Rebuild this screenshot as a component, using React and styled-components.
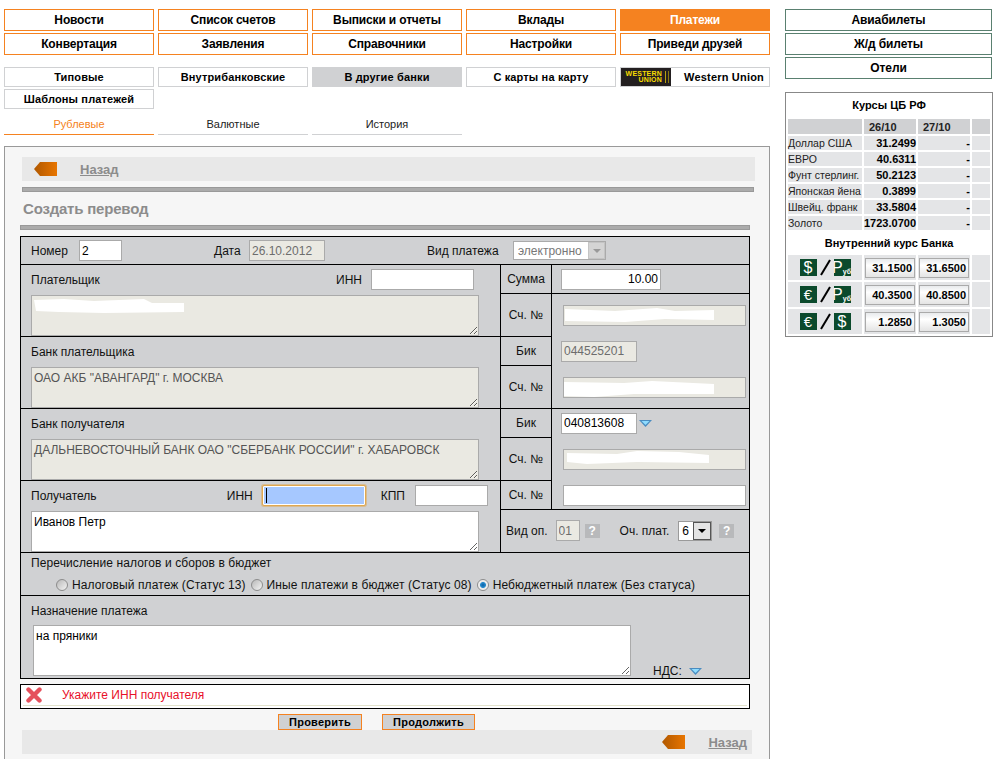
import styled, { createGlobalStyle } from 'styled-components';

const GlobalStyle = createGlobalStyle`
	html,
	body {
		margin: 0;
		height: 759px;
		overflow: hidden;
		background: #fff;
		color: #000;
		font-family: 'Liberation Sans', Arial, sans-serif;
		font-size: 12px;
	}
`;

const Page = styled.div`
	display: flex;
	align-items: flex-start;
	padding: 9px 0 0 4px;
`;

const MainColumn = styled.div`
	width: 766px;
	flex-shrink: 0;
`;

const SideColumn = styled.div`
	width: 208px;
	margin-left: 15px;
`;

const NavGrid = styled.div`
	display: grid;
	grid-template-columns: repeat(5, 150px);
	gap: 2px 4px;
	margin-bottom: ${props => props.$bottom || 0}px;
`;

const NavItem = styled.div`
	display: flex;
	align-items: center;
	justify-content: center;
	box-sizing: border-box;
	height: 22px;
	border: 1px solid #f58220;
	background: ${props => (props.$active ? '#f58220' : '#fff')};
	color: ${props => (props.$active ? '#fff' : '#000')};
	font-weight: 700;
	letter-spacing: -0.15px;
`;

const SubItem = styled.div`
	display: flex;
	align-items: center;
	justify-content: center;
	box-sizing: border-box;
	height: 20px;
	border: 1px solid #d0d1d3;
	background: ${props => (props.$active ? '#d0d1d3' : '#fff')};
	font-size: 11px;
	font-weight: 700;
	letter-spacing: 0.15px;
`;

const UnionItem = styled(SubItem)`
	justify-content: flex-start;
	letter-spacing: 0.2px;
`;

const UnionLogo = styled.div`
	display: flex;
	align-items: center;
	justify-content: flex-end;
	gap: 3px;
	box-sizing: border-box;
	width: 50px;
	height: 18px;
	margin-right: 13px;
	padding: 0 2px;
	background: #231f20;
	color: #f7dc00;
`;

const UnionWord = styled.div`
	font-size: 7px;
	font-weight: 700;
	line-height: 6px;
	letter-spacing: 0.2px;
	text-align: right;
`;

const UnionBars = styled.div`
	width: 2px;
	height: 12px;
	border-left: 1px solid #b89f10;
	border-right: 1px solid #8a7a10;
`;

const TabRow = styled.div`
	display: grid;
	grid-template-columns: repeat(3, 150px);
	gap: 4px;
	margin: 4px 0 11px;
`;

const Tab = styled.div`
	display: flex;
	align-items: center;
	justify-content: center;
	box-sizing: border-box;
	height: 22px;
	border-bottom: 1px solid ${props => (props.$active ? '#f58220' : '#d0d1d3')};
	color: ${props => (props.$active ? '#f58220' : '#222')};
	font-size: 11px;
`;

const Panel = styled.div`
	box-sizing: border-box;
	height: 640px;
	padding: 10px 0 0 15px;
	border: 1px solid #999;
	background: #f6f6f6;
`;

const BackBar = styled.div`
	display: flex;
	align-items: center;
	justify-content: ${props => (props.$end ? 'flex-end' : 'flex-start')};
	gap: 23px;
	box-sizing: border-box;
	width: ${props => props.$width}px;
	height: 24px;
	margin-left: 2px;
	padding: ${props => (props.$end ? '0 5px 0 0' : '0 0 0 12px')};
	background: #e8e8e8;
`;

const BackLink = styled.a`
	color: #8c8c8c;
	font-size: 13px;
	font-weight: 700;
	text-decoration: underline;
`;

const Rule = styled.div`
	box-sizing: border-box;
	width: ${props => props.$width}px;
	height: 5px;
	margin-left: ${props => props.$left}px;
	border: 1px solid #999;
	background: #ababab;
`;

const TopRule = styled(Rule)`
	margin-top: 6px;
`;

const Title = styled.h2`
	display: flex;
	align-items: center;
	height: 33px;
	margin: 0 0 0 3px;
	color: #8c8c8c;
	font-size: 15px;
	font-weight: 700;
	letter-spacing: -0.2px;
`;

const FormTable = styled.div`
	box-sizing: border-box;
	width: 730px;
	margin-top: 6px;
	border: 1px solid #000;
	background: #d0d1d3;
	color: #111;
`;

const HeadRow = styled.div`
	display: grid;
	grid-template-columns: 183px 213px auto;
	align-items: center;
	box-sizing: border-box;
	height: 28px;
	padding-left: 10px;
	border-bottom: 1px solid #000;
`;

const HeadField = styled.div`
	display: flex;
	align-items: center;
`;

const HeadLabel = styled.span`
	width: ${props => props.$width}px;
	flex-shrink: 0;
`;

const Middle = styled.div`
	display: flex;
`;

const LeftStack = styled.div`
	width: 479px;
	flex-shrink: 0;
	border-right: 1px solid #000;
`;

const PartyBlock = styled.div`
	box-sizing: border-box;
	height: 72px;
	padding-left: 10px;
	border-bottom: 1px solid #000;
`;

const PartyHead = styled.div`
	display: flex;
	align-items: center;
	box-sizing: border-box;
	height: 30px;
	padding: 0 ${props => props.$right || 0}px 1px 0;
`;

const PartyTitle = styled.span`
	flex: 1;
`;

const InlineLabel = styled.span`
	margin: 0 ${props => props.$right || 9}px 0 ${props => props.$left || 0}px;
`;

const RightStack = styled.div`
	flex: 1;
	min-width: 0;
`;

const RightRow = styled.div`
	display: flex;
	height: ${props => (props.$tall ? 43 : 29)}px;
`;

const CellLabel = styled.div`
	display: flex;
	align-items: center;
	justify-content: center;
	box-sizing: border-box;
	width: 51px;
	flex-shrink: 0;
	border-right: 1px solid #000;
	border-bottom: 1px solid #000;
`;

const CellValue = styled.div`
	display: flex;
	align-items: center;
	flex: 1;
	box-sizing: border-box;
	padding-left: ${props => (props.$account ? 11 : 9)}px;
	border-bottom: 1px solid ${props => (props.$open ? 'transparent' : '#000')};
`;

const OperationRow = styled.div`
	display: flex;
	align-items: center;
	box-sizing: border-box;
	height: 43px;
	padding: 0 0 1px 5px;
	border-bottom: 1px solid #000;
`;

const Field = styled.input`
	box-sizing: border-box;
	width: ${props => props.$width}px;
	height: 21px;
	margin: 0;
	padding: 0 2px;
	border: 1px solid #aaa;
	border-radius: 0;
	outline: none;
	background: ${props => (props.disabled ? '#eae9e2' : '#fff')};
	color: ${props => (props.disabled ? '#6d6d6d' : '#000')};
	font-family: inherit;
	font-size: 12px;
	text-align: ${props => props.$align || 'left'};
	opacity: 1;
`;

const FocusField = styled.div`
	display: flex;
	align-items: center;
	box-sizing: border-box;
	width: 104px;
	height: 21px;
	padding: 1px 2px;
	border: 1px solid #e0a850;
	border-radius: 2px;
	background: #a6c8ff;
	box-shadow: inset 0 0 0 1px #fff, 0 0 0 1px rgba(224, 168, 80, 0.5);
`;

const Caret = styled.div`
	width: 1px;
	height: 15px;
	margin-left: 1px;
	background: #000;
`;

const Note = styled.textarea`
	display: block;
	box-sizing: border-box;
	width: ${props => props.$width}px;
	height: ${props => props.$height}px;
	margin: 0;
	padding: 3px 2px;
	border: 1px solid #aaa;
	border-radius: 0;
	outline: none;
	overflow: hidden;
	resize: both;
	background: ${props => (props.$plain ? '#fff' : '#eae9e2')};
	color: ${props => (props.$plain ? '#000' : '#555')};
	font-family: inherit;
	font-size: 12px;
`;

const BlotHolder = styled.div`
	position: relative;
	line-height: 0;
`;

const BlotShape = styled.svg`
	position: absolute;
	top: ${props => props.$top}px;
	left: ${props => props.$left}px;
`;

const Combo = styled.div`
	display: flex;
	align-items: center;
	justify-content: space-between;
	box-sizing: border-box;
	width: ${props => props.$width}px;
	height: ${props => props.$height}px;
	padding-left: ${props => (props.$off ? 4 : 3)}px;
	border: ${props => (props.$off ? '1px solid #aaa' : '1px solid #9a9a9a')};
	background: #fff;
	color: ${props => (props.$off ? '#777' : '#000')};
`;

const ComboButton = styled.div`
	display: flex;
	align-items: center;
	justify-content: center;
	box-sizing: border-box;
	width: ${props => (props.$off ? 17 : 18)}px;
	height: 100%;
	border: 1px solid ${props => (props.$off ? '#c4c4c4' : '#555')};
	background: ${props => (props.$off ? '#d4d4d4' : '#e4e4e4')};
`;

const ComboArrow = styled.div`
	width: 0;
	height: 0;
	border-top: 4px solid ${props => (props.$off ? '#999' : '#000')};
	border-left: 4px solid transparent;
	border-right: 4px solid transparent;
`;

const HelpMark = styled.div`
	display: flex;
	align-items: center;
	justify-content: center;
	width: 15px;
	height: 14px;
	margin: 0 ${props => props.$right || 0}px 0 ${props => props.$left}px;
	background: #b8b9bb;
	color: #fff;
	font-size: 12px;
	font-weight: 700;
`;

const OperationLabel = styled.span`
	margin-right: ${props => props.$right}px;
`;

const DropMark = styled.svg`
	flex-shrink: 0;
	margin-left: ${props => props.$left}px;
`;

const TaxRow = styled.div`
	box-sizing: border-box;
	height: 43px;
	padding: 3px 0 0 10px;
	border-bottom: 1px solid #000;
	letter-spacing: 0.1px;
`;

const TaxOptions = styled.div`
	display: flex;
	gap: 5px;
	margin: 8px 0 0 25px;
`;

const TaxOption = styled.label`
	display: flex;
	align-items: center;
	gap: 4px;
`;

const Radio = styled.span`
	display: block;
	box-sizing: border-box;
	width: 12px;
	height: 12px;
	border: 1px solid #8c8c8c;
	border-radius: 50%;
	background: ${props =>
		props.$checked
			? 'radial-gradient(circle, #0b5fa5 0, #2a8fd0 38%, #e8e8e8 46%, #fff 100%)'
			: 'linear-gradient(135deg, #b8b8b8, #f4f4f4)'};
`;

const PurposeRow = styled.div`
	box-sizing: border-box;
	height: 82px;
	padding: 8px 0 0 10px;
`;

const PurposeBody = styled.div`
	display: flex;
	align-items: flex-end;
	margin: 7px 0 0 2px;
`;

const VatBlock = styled.div`
	display: flex;
	align-items: center;
	margin: 0 0 -2px 22px;
`;

const ErrorBox = styled.div`
	box-sizing: border-box;
	width: 730px;
	height: 25px;
	margin-top: 5px;
	padding: 0 2px;
	border: 1px solid #000;
	background: #fff;
`;

const ErrorBody = styled.div`
	display: flex;
	align-items: center;
	height: 20px;
	border-bottom: 1px solid #e2e2cc;
	color: #e8102a;
`;

const ErrorIcon = styled.svg`
	margin: 0 20px 0 3px;
`;

const Actions = styled.div`
	display: flex;
	gap: 20px;
	margin: 5px 0 0 258px;
`;

const ActionButton = styled.button`
	box-sizing: border-box;
	width: ${props => props.$width}px;
	height: 16px;
	padding: 0;
	border: 1px solid #f58220;
	border-radius: 0;
	background: #d0d1d3;
	color: #000;
	font-family: inherit;
	font-size: 11px;
	font-weight: 700;
	letter-spacing: 0.25px;
`;

const SideLink = styled.div`
	display: flex;
	align-items: center;
	justify-content: center;
	box-sizing: border-box;
	width: 207px;
	height: 22px;
	margin-bottom: 2px;
	border: 1px solid #5a8070;
	font-weight: 700;
	letter-spacing: -0.1px;
`;

const RatesBox = styled.div`
	box-sizing: border-box;
	width: 208px;
	margin-top: 13px;
	border: 1px solid #888;
	background: #fff;
`;

const RatesTitle = styled.div`
	display: flex;
	align-items: center;
	justify-content: center;
	box-sizing: border-box;
	height: ${props => props.$height}px;
	font-size: 11px;
	font-weight: 700;
`;

const RatesTable = styled.table`
	width: 206px;
	table-layout: fixed;
	border-collapse: separate;
	border-spacing: 2px;
`;

const RatesColumn = styled.col`
	width: ${props => props.$width}px;
`;

const HeadCell = styled.th`
	height: 15px;
	padding: 0 0 0 5px;
	background: #d0d1d3;
	font-size: 11px;
	font-weight: 700;
	text-align: left;
	color: #222;
`;

const NameCell = styled.td`
	height: 14px;
	padding: 0;
	background: #e4e5e7;
	color: #222;
	font-size: 10.5px;
	white-space: nowrap;
`;

const ValueCell = styled.td`
	height: 14px;
	padding: 0;
	background: #e4e5e7;
	font-size: 11px;
	font-weight: 700;
	text-align: right;
`;

const PairCell = styled.td`
	height: 25px;
	padding: 0;
	background: #e4e5e7;
`;

const PairIcons = styled.div`
	display: flex;
	align-items: center;
	justify-content: center;
`;

const MoneyBadge = styled.div`
	display: flex;
	align-items: center;
	justify-content: center;
	width: 17px;
	height: 17px;
	overflow: hidden;
	background: #0b4a2c;
	color: #fff;
	font-size: ${props => props.$size || 16}px;
	line-height: 17px;
`;

const RubleSmall = styled.span`
	align-self: flex-end;
	font-size: 7px;
	font-weight: 700;
	line-height: 9px;
`;

const RubleBig = styled.span`
	margin-left: -1px;
	font-size: 16px;
`;

const RateField = styled.div`
	display: flex;
	align-items: center;
	justify-content: flex-end;
	box-sizing: border-box;
	height: 20px;
	margin: 0 1px;
	padding-right: 2px;
	border: 1px solid #aaa;
	background: linear-gradient(#e8eaec, #fff 35%, #e4e4e4);
	font-size: 11px;
	font-weight: 700;
`;

const BackArrow = () => (
	<svg width="23" height="14" viewBox="0 0 23 14">
		<defs>
			<linearGradient id="back-fill" x1="0" x2="1" y1="0" y2="0">
				<stop offset="0" stopColor="#b05800" />
				<stop offset="1" stopColor="#e87500" />
			</linearGradient>
		</defs>
		<polygon points="0,7 6,0 23,0 23,14 6,14" fill="url(#back-fill)" />
	</svg>
);

const DownMark = ({ left }) => (
	<DropMark $left={left} width="13" height="7" viewBox="0 0 13 7">
		<polygon points="0,0 13,0 6.5,7" fill="#4a8cc0" />
		<polygon points="2.5,1 10.5,1 6.5,5" fill="#8fdcff" />
	</DropMark>
);

const Blot = ({ top, left, width, height, points }) => (
	<BlotShape $top={top} $left={left} width={width} height={height} viewBox={`0 0 ${width} ${height}`}>
		<polygon points={points} fill="#fff" />
	</BlotShape>
);

const Dollar = () => <MoneyBadge>$</MoneyBadge>;
const Euro = () => <MoneyBadge $size={15}>€</MoneyBadge>;
const Ruble = () => (
	<MoneyBadge>
		<RubleBig>Р</RubleBig>
		<RubleSmall>уб</RubleSmall>
	</MoneyBadge>
);

const Slash = () => (
	<svg width="17" height="17" viewBox="0 0 17 17">
		<line x1="4" y1="16" x2="13" y2="1" stroke="#000" strokeWidth="2" />
	</svg>
);

const mainNav = [
	'Новости',
	'Список счетов',
	'Выписки и отчеты',
	'Вклады',
	'Платежи',
	'Конвертация',
	'Заявления',
	'Справочники',
	'Настройки',
	'Приведи друзей',
];

const cbRates = [
	['Доллар США', '31.2499'],
	['ЕВРО', '40.6311'],
	['Фунт стерлинг.', '50.2123'],
	['Японская йена', '0.3899'],
	['Швейц. франк', '33.5804'],
	['Золото', '1723.0700'],
];

const bankRates = [
	[Dollar, Ruble, '31.1500', '31.6500'],
	[Euro, Ruble, '40.3500', '40.8500'],
	[Euro, Dollar, '1.2850', '1.3050'],
];

const RatesColumns = () => (
	<colgroup>
		<RatesColumn $width={74} />
		<RatesColumn $width={52} />
		<RatesColumn $width={52} />
		<RatesColumn $width={18} />
	</colgroup>
);

const App = () => (
	<>
		<GlobalStyle />
		<Page>
			<MainColumn>
				<NavGrid $bottom={12}>
					{mainNav.map(item => (
						<NavItem key={item} $active={item === 'Платежи'}>
							{item}
						</NavItem>
					))}
				</NavGrid>

				<NavGrid>
					<SubItem>Типовые</SubItem>
					<SubItem>Внутрибанковские</SubItem>
					<SubItem $active>В другие банки</SubItem>
					<SubItem>С карты на карту</SubItem>
					<UnionItem>
						<UnionLogo>
							<UnionWord>
								WESTERN
								<br />
								UNION
							</UnionWord>
							<UnionBars />
						</UnionLogo>
						Western Union
					</UnionItem>
					<SubItem>Шаблоны платежей</SubItem>
				</NavGrid>

				<TabRow>
					<Tab $active>Рублевые</Tab>
					<Tab>Валютные</Tab>
					<Tab>История</Tab>
				</TabRow>

				<Panel>
					<BackBar $width={733}>
						<BackArrow />
						<BackLink>Назад</BackLink>
					</BackBar>
					<TopRule $width={732} $left={2} />
					<Title>Создать перевод</Title>
					<Rule $width={730} $left={0} />

					<FormTable>
						<HeadRow>
							<HeadField>
								<HeadLabel $width={48}>Номер</HeadLabel>
								<Field $width={43} defaultValue="2" />
							</HeadField>
							<HeadField>
								<HeadLabel $width={35}>Дата</HeadLabel>
								<Field $width={76} disabled defaultValue="26.10.2012" />
							</HeadField>
							<HeadField>
								<HeadLabel $width={86}>Вид платежа</HeadLabel>
								<Combo $off $width={93} $height={19}>
									электронно
									<ComboButton $off>
										<ComboArrow $off />
									</ComboButton>
								</Combo>
							</HeadField>
						</HeadRow>

						<Middle>
							<LeftStack>
								<PartyBlock>
									<PartyHead $right={26}>
										<PartyTitle>Плательщик</PartyTitle>
										<InlineLabel>ИНН</InlineLabel>
										<Field $width={103} />
									</PartyHead>
									<BlotHolder>
										<Note $width={448} $height={41} readOnly defaultValue="" />
										<Blot
											top={3}
											left={3}
											width={150}
											height={15}
											points="0,2 30,1 60,3 110,1 118,5 150,5 150,14 70,15 25,14 2,13"
										/>
									</BlotHolder>
								</PartyBlock>
								<PartyBlock>
									<PartyHead>
										<PartyTitle>Банк плательщика</PartyTitle>
									</PartyHead>
									<Note $width={448} $height={41} readOnly defaultValue={'ОАО АКБ "АВАНГАРД" г. МОСКВА'} />
								</PartyBlock>
								<PartyBlock>
									<PartyHead>
										<PartyTitle>Банк получателя</PartyTitle>
									</PartyHead>
									<Note
										$width={448}
										$height={41}
										readOnly
										defaultValue={'ДАЛЬНЕВОСТОЧНЫЙ БАНК ОАО "СБЕРБАНК РОССИИ" г. ХАБАРОВСК'}
									/>
								</PartyBlock>
								<PartyBlock>
									<PartyHead $right={12}>
										<PartyTitle>Получатель</PartyTitle>
										<InlineLabel>ИНН</InlineLabel>
										<FocusField>
											<Caret />
										</FocusField>
										<InlineLabel $left={15} $right={10}>
											КПП
										</InlineLabel>
										<Field $width={73} />
									</PartyHead>
									<Note $plain $width={448} $height={41} readOnly defaultValue="Иванов Петр" />
								</PartyBlock>
							</LeftStack>

							<RightStack>
								<RightRow>
									<CellLabel>Сумма</CellLabel>
									<CellValue>
										<Field $width={100} $align="right" defaultValue="10.00" />
									</CellValue>
								</RightRow>
								<RightRow $tall>
									<CellLabel>Сч. №</CellLabel>
									<CellValue $account $open>
										<BlotHolder>
											<Field $width={183} disabled />
											<Blot
												top={3}
												left={2}
												width={149}
												height={14}
												points="0,1 50,3 92,0 110,3 149,2 149,12 100,11 60,14 0,13"
											/>
										</BlotHolder>
									</CellValue>
								</RightRow>
								<RightRow>
									<CellLabel>Бик</CellLabel>
									<CellValue $open>
										<Field $width={76} disabled defaultValue="044525201" />
									</CellValue>
								</RightRow>
								<RightRow $tall>
									<CellLabel>Сч. №</CellLabel>
									<CellValue $account>
										<BlotHolder>
											<Field $width={183} disabled />
											<Blot
												top={4}
												left={1}
												width={150}
												height={16}
												points="0,1 60,2 88,0 150,3 150,13 70,13 30,16 0,15"
											/>
										</BlotHolder>
									</CellValue>
								</RightRow>
								<RightRow>
									<CellLabel>Бик</CellLabel>
									<CellValue $open>
										<Field $width={76} defaultValue="040813608" />
										<DownMark left={2} />
									</CellValue>
								</RightRow>
								<RightRow $tall>
									<CellLabel>Сч. №</CellLabel>
									<CellValue $account $open>
										<BlotHolder>
											<Field $width={183} disabled />
											<Blot
												top={2}
												left={4}
												width={142}
												height={13}
												points="0,2 50,3 70,0 112,1 142,4 142,12 70,11 20,13 0,11"
											/>
										</BlotHolder>
									</CellValue>
								</RightRow>
								<RightRow>
									<CellLabel>Сч. №</CellLabel>
									<CellValue $account>
										<Field $width={183} />
									</CellValue>
								</RightRow>
								<OperationRow>
									<OperationLabel $right={8}>Вид оп.</OperationLabel>
									<Field $width={24} disabled defaultValue="01" />
									<HelpMark $left={5} $right={20}>
										?
									</HelpMark>
									<OperationLabel $right={9}>Оч. плат.</OperationLabel>
									<Combo $width={34} $height={20}>
										6
										<ComboButton>
											<ComboArrow />
										</ComboButton>
									</Combo>
									<HelpMark $left={7}>?</HelpMark>
								</OperationRow>
							</RightStack>
						</Middle>

						<TaxRow>
							Перечисление налогов и сборов в бюджет
							<TaxOptions>
								<TaxOption>
									<Radio />
									Налоговый платеж (Статус 13)
								</TaxOption>
								<TaxOption>
									<Radio />
									Иные платежи в бюджет (Статус 08)
								</TaxOption>
								<TaxOption>
									<Radio $checked />
									Небюджетный платеж (Без статуса)
								</TaxOption>
							</TaxOptions>
						</TaxRow>

						<PurposeRow>
							Назначение платежа
							<PurposeBody>
								<Note $plain $width={598} $height={51} readOnly defaultValue="на пряники" />
								<VatBlock>
									НДС:
									<DownMark left={7} />
								</VatBlock>
							</PurposeBody>
						</PurposeRow>
					</FormTable>

					<ErrorBox>
						<ErrorBody>
							<ErrorIcon width="16" height="16" viewBox="0 0 16 16">
								<path d="M2.5 2.5 L13.5 13.5 M13.5 2.5 L2.5 13.5" stroke="#e5505c" strokeWidth="4.4" strokeLinecap="round" />
							</ErrorIcon>
							Укажите ИНН получателя
						</ErrorBody>
					</ErrorBox>

					<Actions>
						<ActionButton $width={84}>Проверить</ActionButton>
						<ActionButton $width={93}>Продолжить</ActionButton>
					</Actions>

					<BackBar $end $width={730}>
						<BackArrow />
						<BackLink>Назад</BackLink>
					</BackBar>
				</Panel>
			</MainColumn>

			<SideColumn>
				<SideLink>Авиабилеты</SideLink>
				<SideLink>Ж/д билеты</SideLink>
				<SideLink>Отели</SideLink>

				<RatesBox>
					<RatesTitle $height={24}>Курсы ЦБ РФ</RatesTitle>
					<RatesTable>
						<RatesColumns />
						<thead>
							<tr>
								<HeadCell />
								<HeadCell>26/10</HeadCell>
								<HeadCell>27/10</HeadCell>
								<HeadCell />
							</tr>
						</thead>
						<tbody>
							{cbRates.map(([name, value]) => (
								<tr key={name}>
									<NameCell>{name}</NameCell>
									<ValueCell>{value}</ValueCell>
									<ValueCell>-</ValueCell>
									<ValueCell />
								</tr>
							))}
						</tbody>
					</RatesTable>

					<RatesTitle $height={21}>Внутренний курс Банка</RatesTitle>
					<RatesTable>
						<RatesColumns />
						<tbody>
							{bankRates.map(([From, To, buy, sell]) => (
								<tr key={buy}>
									<PairCell>
										<PairIcons>
											<From />
											<Slash />
											<To />
										</PairIcons>
									</PairCell>
									<PairCell>
										<RateField>{buy}</RateField>
									</PairCell>
									<PairCell>
										<RateField>{sell}</RateField>
									</PairCell>
									<PairCell />
								</tr>
							))}
						</tbody>
					</RatesTable>
				</RatesBox>
			</SideColumn>
		</Page>
	</>
);

export default App;
